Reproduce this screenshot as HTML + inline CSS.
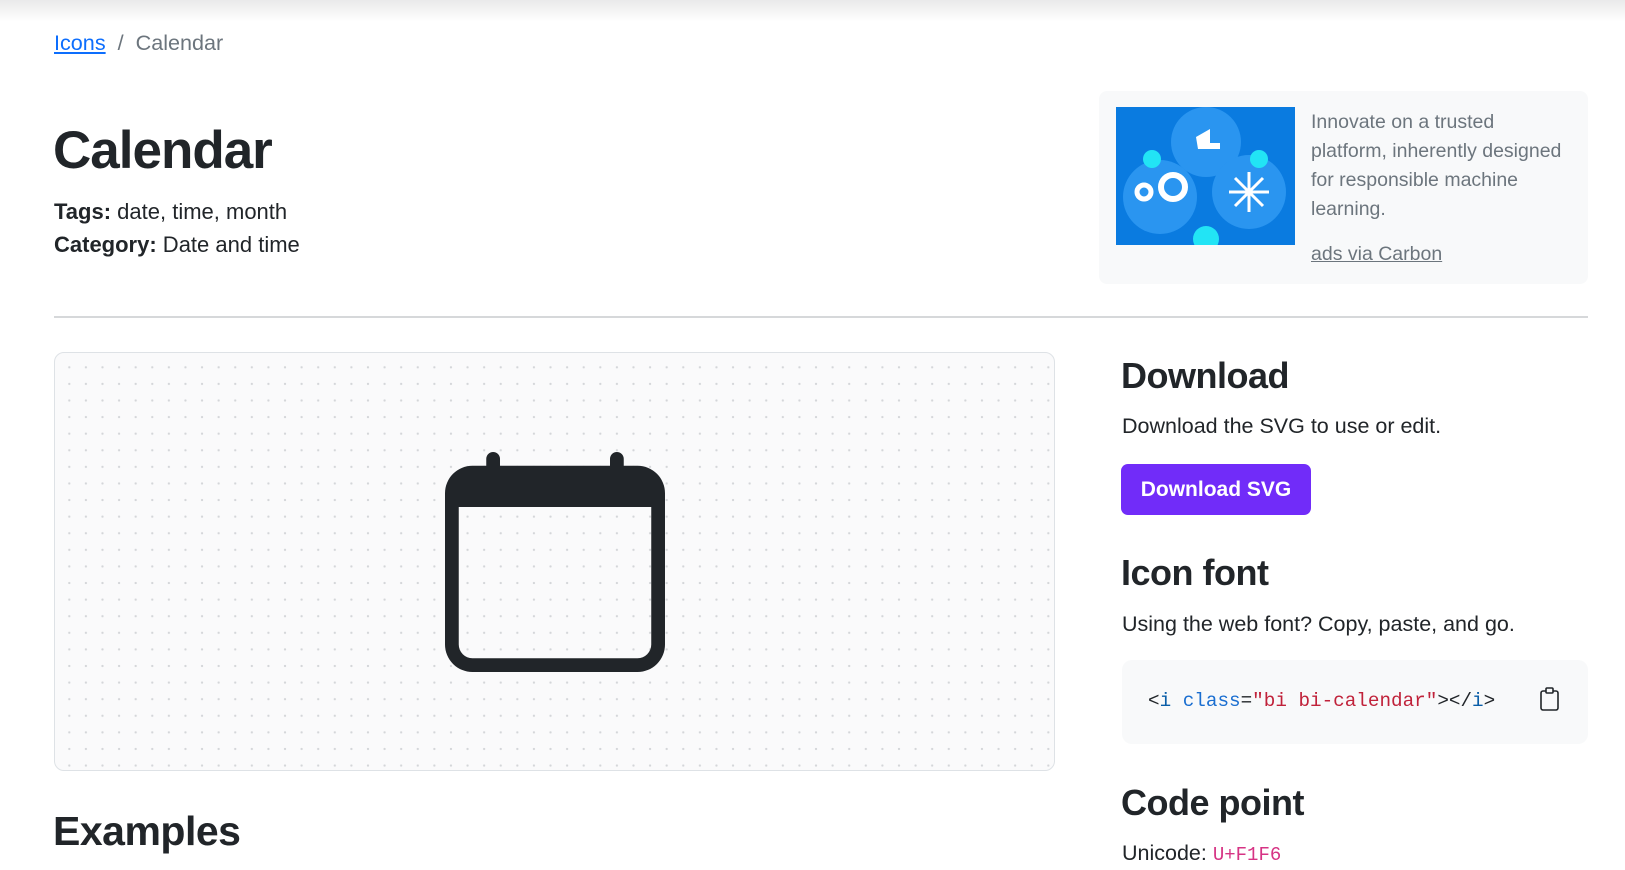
<!DOCTYPE html>
<html><head><meta charset="utf-8"><style>
*{box-sizing:border-box;margin:0;padding:0}
body{width:1625px;height:870px;overflow:hidden;background:#fff;font-family:"Liberation Sans",sans-serif;color:#212529;position:relative}
.top{position:absolute;left:0;top:0;width:1625px;height:22px;background:linear-gradient(#e9e9ea,#fff)}
.a{position:absolute}
.bc{left:54px;top:30px;font-size:21.6px;color:#6c757d}
.bc a{color:#0d6efd;text-decoration:underline}
h1{position:absolute;left:53px;top:120px;font-size:53px;font-weight:bold;letter-spacing:-1px}
.meta{left:54px;font-size:22px}
.ad{left:1099px;top:91px;width:489px;height:193px;background:#f8f9fa;border-radius:8px}
.adimg{left:1116px;top:107px;width:179px;height:138px;background:#0a7be0;overflow:hidden}
.adtxt{left:1311px;top:108px;font-size:19.5px;line-height:29px;color:#6c757d;width:262px}
hr{position:absolute;left:54px;top:316px;width:1534px;border:0;border-top:2px solid #d6d8da}
.prev{left:54px;top:352px;width:1001px;height:419px;border:1px solid #dee2e6;border-radius:10px;background-color:#fafafb;background-image:radial-gradient(circle,#d4d6d9 1px,transparent 1.3px);background-size:16.6px 16.6px;background-position:6px 6px}
h2{position:absolute;font-size:36px;font-weight:bold;left:1121px;letter-spacing:-.5px}
.p{left:1122px;font-size:21.5px}
.btn{left:1121px;top:464px;width:190px;height:51px;background:#712cf9;border-radius:7px;color:#fff;font-size:21px;font-weight:bold;display:flex;align-items:center;justify-content:center}
.code{left:1122px;top:660px;width:466px;height:84px;background:#f8f9fa;border-radius:10px;font-family:"Liberation Mono",monospace;font-size:19.3px;padding:30px 0 0 26px;color:#212529}
</style></head><body>
<div class="top"></div>
<div class="a bc"><a>Icons</a> &nbsp;/&nbsp; Calendar</div>
<h1>Calendar</h1>
<div class="a meta" style="top:199px"><b>Tags:</b> date, time, month</div>
<div class="a meta" style="top:232px"><b>Category:</b> Date and time</div>
<div class="a ad"></div>
<div class="a adimg"><svg width="179" height="138">
<circle cx="90" cy="35" r="35" fill="#2a95f0"/><circle cx="44" cy="90" r="37" fill="#2a95f0"/><circle cx="133" cy="85" r="37" fill="#2a95f0"/>
<circle cx="36" cy="52" r="9" fill="#22e4f5"/><circle cx="143" cy="52" r="9" fill="#22e4f5"/><circle cx="90" cy="132" r="13" fill="#22e4f5"/>
<circle cx="57" cy="80" r="12" fill="none" stroke="#fff" stroke-width="6"/><circle cx="28" cy="85" r="7" fill="none" stroke="#fff" stroke-width="5"/>
<path d="M133 65v40M113 85h40M119 71l28 28M147 71l-28 28" stroke="#fff" stroke-width="3"/><path d="M80 30l14-8v14h10v6H82z" fill="#fff"/></svg></div>
<div class="a adtxt">Innovate on a trusted platform, inherently designed for responsible machine learning.<div style="margin-top:16px;text-decoration:underline">ads via Carbon</div></div>
<hr>
<div class="a prev"></div>
<svg class="a" style="left:445px;top:452px" width="220" height="220" viewBox="0 0 16 16" fill="#212529"><path d="M3.5 0a.5.5 0 0 1 .5.5V1h8V.5a.5.5 0 0 1 1 0V1h1a2 2 0 0 1 2 2v11a2 2 0 0 1-2 2H2a2 2 0 0 1-2-2V3a2 2 0 0 1 2-2h1V.5a.5.5 0 0 1 .5-.5M1 4v10a1 1 0 0 0 1 1h12a1 1 0 0 0 1-1V4z"/></svg>
<h2 style="left:53px;top:808px;font-size:41px">Examples</h2>
<h2 style="top:355px">Download</h2>
<div class="a p" style="top:414px">Download the SVG to use or edit.</div>
<div class="a btn">Download SVG</div>
<h2 style="top:552px">Icon font</h2>
<div class="a p" style="top:612px">Using the web font? Copy, paste, and go.</div>
<div class="a code">&lt;<span style="color:#0a5ea8">i</span> <span style="color:#1a6ed0">class</span>=<span style="color:#c0223a">"bi bi-calendar"</span>&gt;&lt;/<span style="color:#0a5ea8">i</span>&gt;
<svg style="position:absolute;left:417px;top:27px" width="22" height="24" viewBox="0 0 22 24" fill="none" stroke="#212529" stroke-width="1.6"><rect x="2" y="4" width="17" height="19" rx="2"/><rect x="7" y="1" width="7" height="5" rx="1" fill="#f8f9fa"/></svg></div>
<h2 style="top:782px">Code point</h2>
<div class="a p" style="top:841px">Unicode: <span style="font-family:'Liberation Mono',monospace;color:#d63384;font-size:19px">U+F1F6</span></div>
</body></html>
